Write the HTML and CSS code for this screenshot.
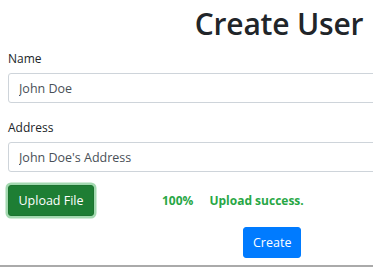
FILE: index.html
```html
<!DOCTYPE html>
<html lang="en">
<head>
<meta charset="utf-8">
<title>Create User</title>
<link rel="stylesheet" href="styles.css">
</head>
<body>
<div class="page">
  <h1 class="title">Create User</h1>
  <div class="group">
    <label class="label" for="name">Name</label>
    <input class="input" id="name" type="text" value="John Doe">
  </div>
  <div class="group">
    <label class="label" for="address">Address</label>
    <input class="input" id="address" type="text" value="John Doe's Address">
  </div>
  <div class="upload-row">
    <button class="btn btn-upload" type="button">Upload File</button>
    <span class="status pct">100%</span>
    <span class="status msg">Upload success.</span>
  </div>
  <div class="actions">
    <button class="btn btn-create" type="submit">Create</button>
  </div>
</div>
<div class="rule"></div>
</body>
</html>
```
FILE: styles.css
```css
html { overflow: hidden; }
body {
  margin: 0;
  background: #fff;
  color: #212529;
  font-family: "Open Sans", "Noto Sans", sans-serif;
  font-size: 12px;
}
.page {
  width: 530px;
  padding: 0 8px;
  display: flex;
  flex-direction: column;
}
.title {
  margin: 5px 0 0;
  font-size: 30px;
  font-weight: 600;
  line-height: 38px;
  text-align: center;
  padding-left: 12px;
  letter-spacing: -0.2px;
}
.group {
  display: flex;
  flex-direction: column;
  margin-top: 6px;
}
.group + .group { margin-top: 15px; }
.label {
  line-height: 19px;
  margin-bottom: 5px;
}
.input {
  height: 30px;
  box-sizing: border-box;
  border: 1px solid #ced4da;
  border-radius: 3px;
  padding: 0 10px;
  font: inherit;
  font-size: 12.5px;
  color: #495057;
}
.upload-row {
  display: flex;
  align-items: center;
  margin-top: 13px;
}
.btn {
  font: inherit;
  font-size: 12.5px;
  color: #fff;
  border: 1px solid transparent;
  border-radius: 3px;
  height: 31px;
  box-sizing: border-box;
  padding: 0 9px;
}
.btn-upload {
  width: 86px;
  background: #1e7e34;
  border-color: #1c7430;
  box-shadow: 0 0 0 2.5px rgba(72, 180, 97, 0.5);
}
.status {
  color: #28a745;
  font-weight: 700;
}
.pct { margin-left: 68px; }
.msg { margin-left: 16px; }
.actions {
  display: flex;
  justify-content: center;
  margin-top: 11px;
}
.btn-create {
  width: 58px;
  background: #007bff;
  border-color: #007bff;
  margin-left: -2px;
}
.rule {
  margin-top: 7px;
  height: 2px;
  background: #aaa;
}
```
